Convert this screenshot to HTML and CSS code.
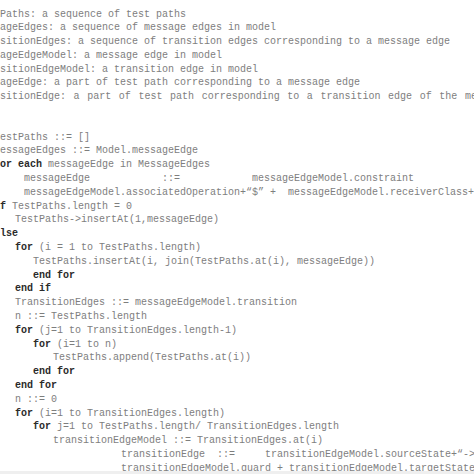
FILE: index.html
```html
<!DOCTYPE html>
<html lang="en">
<head>
<meta charset="utf-8">
<title>Test path generation algorithm</title>
<link rel="stylesheet" href="styles.css">
</head>
<body>
<div class="page">
  <div class="defs">
    <div class="ln">TestPaths: a sequence of test paths</div>
    <div class="ln">MessageEdges: a sequence of message edges in model</div>
    <div class="ln">TransitionEdges: a sequence of transition edges corresponding to a message edge</div>
    <div class="ln">MessageEdgeModel: a message edge in model</div>
    <div class="ln">TransitionEdgeModel: a transition edge in model</div>
    <div class="ln">MessageEdge: a part of test path corresponding to a message edge</div>
    <div class="ln wide">TransitionEdge: a part of test path corresponding to a transition edge of the message edge</div>
  </div>
  <div class="code">
    <div class="ln">TestPaths ::= []</div>
    <div class="ln">MessageEdges ::= Model.messageEdge</div>
    <div class="ln"><b class="kw">for each</b> messageEdge in MessageEdges</div>
    <div class="ln i2">messageEdge            ::=            messageEdgeModel.constraint</div>
    <div class="ln i2">messageEdgeModel.associatedOperation+“$” +  messageEdgeModel.receiverClass+</div>
    <div class="ln"><b class="kw">if</b> TestPaths.length = 0</div>
    <div class="ln i1">TestPaths-&gt;insertAt(1,messageEdge)</div>
    <div class="ln"><b class="kw">else</b></div>
    <div class="ln i1"><b class="kw">for</b> (i = 1 to TestPaths.length)</div>
    <div class="ln i3">TestPaths.insertAt(i, join(TestPaths.at(i), messageEdge))</div>
    <div class="ln i3"><b class="kw">end for</b></div>
    <div class="ln i1"><b class="kw">end if</b></div>
    <div class="ln i1">TransitionEdges ::= messageEdgeModel.transition</div>
    <div class="ln i1">n ::= TestPaths.length</div>
    <div class="ln i1"><b class="kw">for</b> (j=1 to TransitionEdges.length-1)</div>
    <div class="ln i3"><b class="kw">for</b> (i=1 to n)</div>
    <div class="ln i4">TestPaths.append(TestPaths.at(i))</div>
    <div class="ln i3"><b class="kw">end for</b></div>
    <div class="ln i1"><b class="kw">end for</b></div>
    <div class="ln i1">n ::= 0</div>
    <div class="ln i1"><b class="kw">for</b> (i=1 to TransitionEdges.length)</div>
    <div class="ln i3"><b class="kw">for</b> j=1 to TestPaths.length/ TransitionEdges.length</div>
    <div class="ln i4">transitionEdgeModel ::= TransitionEdges.at(i)</div>
    <div class="ln i5">transitionEdge  ::=     transitionEdgeModel.sourceState+“-&gt;”</div>
    <div class="ln i5">transitionEdgeModel.guard + transitionEdgeModel.targetState</div>
  </div>
</div>
</body>
</html>
```

FILE: styles.css
```css
html, body {
  margin: 0;
  padding: 0;
  height: 100%;
  overflow: hidden;
  background: #efefef;
}

.page {
  height: 471px;
  background: #ffffff;
  overflow: hidden;
  font-family: "Liberation Mono", "DejaVu Sans Mono", monospace;
  font-size: 10px;
  line-height: 13.8px;
  color: #7e7e7e;
}

.ln {
  white-space: pre;
}

.defs {
  padding-top: 7.5px;
  margin-left: -24px;
}

.wide {
  word-spacing: 1.6px;
}

.code {
  margin-top: 26.5px;
  margin-left: -6px;
}

.i1 { padding-left: 21px; }
.i2 { padding-left: 30px; }
.i3 { padding-left: 39px; }
.i4 { padding-left: 59px; }
.i5 { padding-left: 127px; }

.kw {
  font-weight: bold;
  color: #2a2a2a;
}
```
